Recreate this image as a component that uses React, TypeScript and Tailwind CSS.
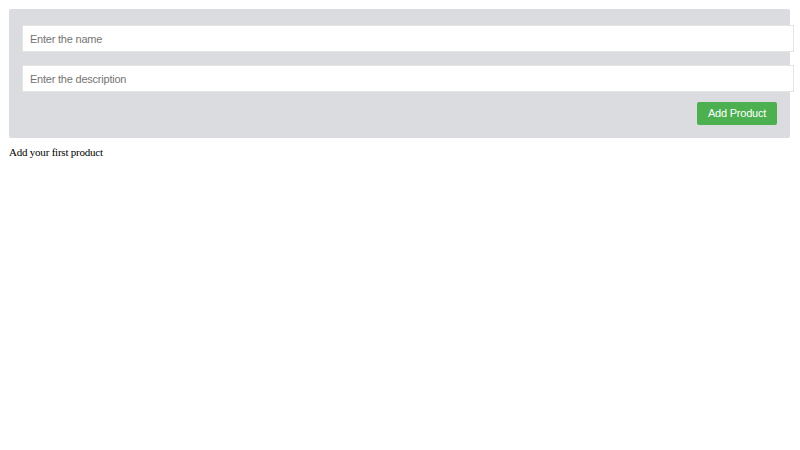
import { useState } from 'react';

export default function App() {
  const [name, setName] = useState('');
  const [description, setDescription] = useState('');

  return (
    <div className="min-h-[450px] bg-white pt-[9px] px-[9px]">
      {/* Form panel */}
      <div className="w-[781px] rounded-[2px] bg-[#dbdcdf] pt-[16px] pb-[13px] px-[13px]">
        <div className="flex flex-col gap-[13px]">
          <input
            type="text"
            value={name}
            onChange={(e) => setName(e.target.value)}
            placeholder="Enter the name"
            className="block h-[27px] w-[772px] border border-[#e4e4e4] bg-white px-[7px] text-[11px] tracking-[-0.02em] text-[#333] placeholder:text-[#757575] outline-none [font-family:'Liberation_Sans',Arial,sans-serif]"
          />
          <input
            type="text"
            value={description}
            onChange={(e) => setDescription(e.target.value)}
            placeholder="Enter the description"
            className="block h-[27px] w-[772px] border border-[#e4e4e4] bg-white px-[7px] text-[11px] tracking-[-0.02em] text-[#333] placeholder:text-[#757575] outline-none [font-family:'Liberation_Sans',Arial,sans-serif]"
          />
        </div>
        <div className="mt-[10px] flex justify-end">
          <button className="h-[23px] w-[80px] rounded-[2px] bg-[#4caf50] text-[11px] tracking-[-0.02em] text-white [font-family:'Liberation_Sans',Arial,sans-serif]">
            Add Product
          </button>
        </div>
      </div>

      <p className="mt-[7px] text-[11px] leading-[15px] tracking-[-0.02em] text-black [font-family:'Liberation_Serif','Times_New_Roman',serif]">
        Add your first product
      </p>
    </div>
  );
}
